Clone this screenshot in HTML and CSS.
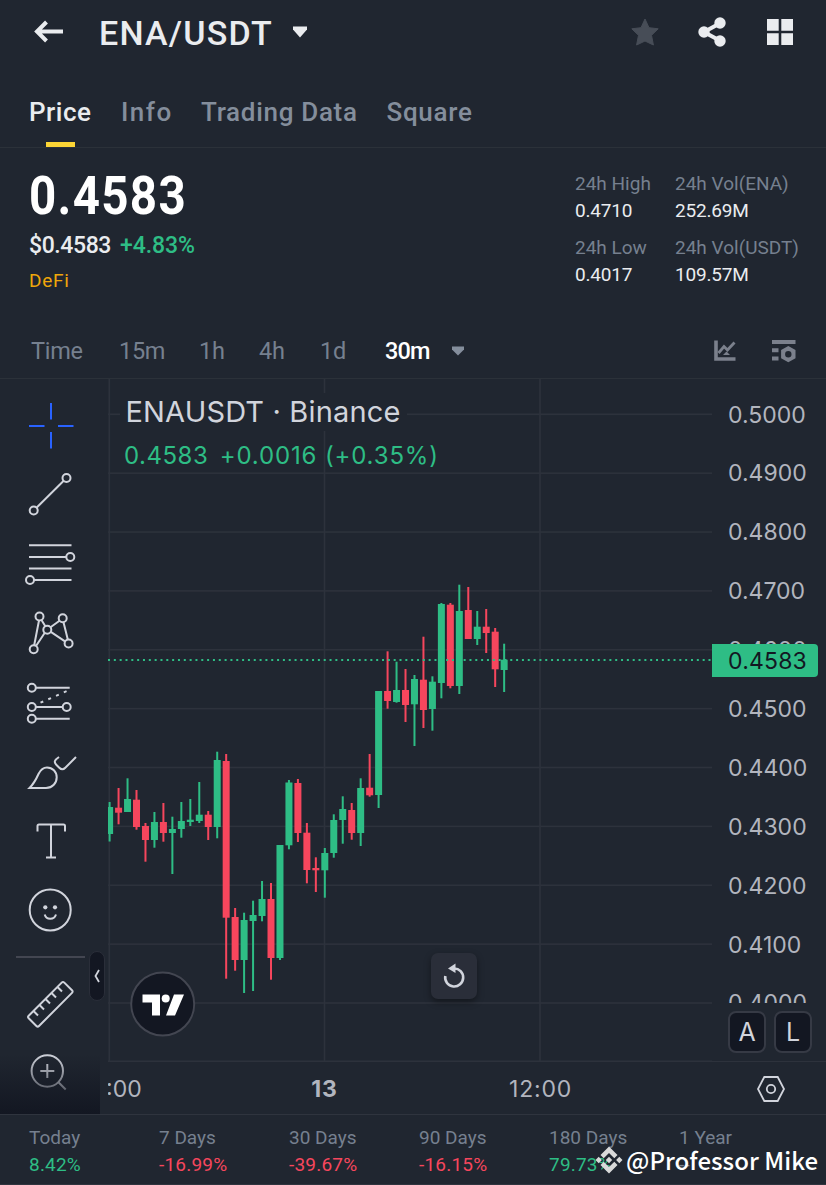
FILE: index.html
```html
<!DOCTYPE html>
<html lang="en">
<head>
    <meta charset="UTF-8">
    <meta name="viewport" content="width=device-width, initial-scale=1.0">
    <title>ENA/USDT</title>
    <link rel="stylesheet" href="styles.css">
</head>
<body>
    <div id="page">
        <div class="header">
            <svg class="back" width="30" height="24" viewBox="0 0 30 24"><path d="M12.500 2L3 11.500L12.500 21M3 11.500H29" fill="none" stroke="#eaecef" stroke-width="4"/></svg>
            <span class="pair">ENA/USDT</span>
            <svg class="caret" width="16" height="12" viewBox="0 0 16 12"><path d="M1 0.500h14v3L8 11.500L1 3.500z" fill="#eaecef"/></svg>
            <div class="header-icons">
                <svg width="30" height="30" viewBox="0 0 30 30"><path d="M15 2l4 8.700 9.200 1.100-6.700 6.500 1.900 9.700L15 24l-8.400 4 1.900-9.700-6.700-6.500L11 10.700z" fill="#474d57" stroke="#474d57" stroke-linejoin="round"/></svg>
                <svg width="30" height="30" viewBox="1 0 30 30"><path d="M23.500 6L7 15l16.500 9" fill="none" stroke="#eaecef" stroke-width="4"/><circle cx="23" cy="6" r="5.700" fill="#eaecef"/><circle cx="7" cy="15" r="5.700" fill="#eaecef"/><circle cx="23" cy="24" r="5.700" fill="#eaecef"/></svg>
                <svg width="30" height="30" viewBox="0 0 30 30"><path d="M2 2h11.700v11.700H2zM16.300 2H28v11.700H16.300zM2 16.300h11.700V28H2zM16.300 16.300H28V28H16.300z" fill="#eaecef"/></svg>
            </div>
        </div>

        <div class="tabs">
            <span class="tab active">Price</span>
            <span class="tab info">Info</span>
            <span class="tab trading">Trading Data</span>
            <span class="tab square">Square</span>
        </div>

        <div class="summary">
            <div class="summary-left">
                <div class="last-price">0.4583</div>
                <div class="fiat"><span>$0.4583</span><span class="up">+4.83%</span></div>
                <div class="tag">DeFi</div>
            </div>
            <div class="stats">
                <div><p>24h High</p><b>0.4710</b></div>
                <div><p>24h Vol(ENA)</p><b>252.69M</b></div>
                <div><p>24h Low</p><b>0.4017</b></div>
                <div><p>24h Vol(USDT)</p><b>109.57M</b></div>
            </div>
        </div>

        <div class="intervals">
            <span class="i-time">Time</span>
            <span class="i-15">15m</span>
            <span class="i-1h">1h</span>
            <span class="i-4h">4h</span>
            <span class="i-1d">1d</span>
            <span class="i-30 active">30m</span>
            <svg width="14" height="10" viewBox="0 0 14 10"><path d="M1 0.500h12v3L7 9.500L1 3.500z" fill="#848e9c"/></svg>
            <div class="interval-icons">
                <svg width="22" height="22" viewBox="0 0 22 22"><path d="M2 0.500v18.500h19.500" fill="none" stroke="#7b808c" stroke-width="3.600"/><path d="M4.500 13L10 6.500l3.500 3.500 7-7.500" fill="none" stroke="#7b808c" stroke-width="2.800"/><path d="M9 15l3.500-3.500L16 15z" fill="#7b808c"/></svg>
                <svg width="24" height="24" viewBox="0 0 24 24"><path d="M0 1h23.500v4H0zM0 9.300h6.500v4H0zM0 17.500h6.500v4H0z" fill="#7b808c"/><path d="M16.300 7l7.200 4v8.300l-7.200 4-7.200-4V11zM16.300 12a3.200 3.200 0 1 0 0 6.400 3.200 3.200 0 0 0 0-6.400z" fill="#7b808c" fill-rule="evenodd"/></svg>
            </div>
        </div>

        <div class="chart">
            <div class="tools">
                <svg width="100" height="69"><path d="M51 12v16.500M51 41v16.500M29 35h15.500M58 35h15.500" stroke="#2962ff"/></svg>
                <svg width="100" height="69"><path d="M36.500 47.700L63.700 20.800"/><circle cx="66.500" cy="18" r="4"/><circle cx="33.700" cy="50.500" r="4"/></svg>
                <svg width="100" height="69"><path d="M29 16.300h42.500M29 28h37.300M29 39.500h42.500M34 51h37.500"/><circle cx="70.300" cy="28" r="4"/><circle cx="30" cy="51" r="4"/></svg>
                <svg width="100" height="69"><path d="M41.500 22L45.300 28.200M50.500 29.300L59.500 22.700M63.500 24.300L67.800 41.500M65 43.300L50.800 33.800M44.800 34.800L36 48M34.200 47.300L39 22.500"/><circle cx="39.500" cy="18.500" r="4"/><circle cx="62.700" cy="20.300" r="4"/><circle cx="47.300" cy="31.700" r="4"/><circle cx="68.600" cy="45.500" r="4"/><circle cx="33.700" cy="51.300" r="4"/></svg>
                <svg width="100" height="69"><path d="M36 20.700h33.700M36 40h26.700M36 51.700h33.700"/><path d="M40.500 35.700L67 24" stroke-dasharray="3 5.500"/><circle cx="31.800" cy="20.700" r="4"/><circle cx="31.800" cy="40" r="4"/><circle cx="66.700" cy="40" r="4"/><circle cx="31.800" cy="51.700" r="4"/></svg>
                <svg width="100" height="69"><path d="M29.500 52c5-5 7-9.500 9-14 2-4 4.500-6.500 8.500-6.500 5.500 0 9.700 4.300 9.700 9.700C56.700 47 52.500 52 46 52zM59 21c-4.500 3-5.500 5-2.500 8l2.800 2.800c2 2 4 2 6 0L76 21"/></svg>
                <svg width="100" height="69"><path d="M37.500 26.500v-5.500q0-1.500 1.500-1.500h24.500q1.500 0 1.500 1.500v5.500M51 19.500v33M46 52.500h10"/></svg>
                <svg width="100" height="69"><circle cx="50.200" cy="36" r="20.500"/><path d="M44.700 40.500c1.500 5.700 9.500 5.700 11.300 0"/><circle class="eye" cx="45.300" cy="33.300" r="2.100"/><circle class="eye" cx="55" cy="33.300" r="2.100"/></svg>
                <hr>
                <svg width="100" height="69"><path d="M61.700 13.600q1.300-1.300 2.600 0l7.700 7.700q1.300 1.300 0 2.600L39 57q-1.300 1.300-2.600 0l-7.700-7.700q-1.300-1.300 0-2.600zM57.500 18l4.500 4.500M51.500 24l4.500 4.500M45.500 30l4.500 4.500M39.500 36l4.500 4.500M33.500 42l4.500 4.500"/></svg>
                <svg width="100" height="69"><circle cx="47.300" cy="33" r="15.700"/><path d="M47.300 26v14M40.300 33h14M58.700 44.500l7 7"/></svg>
                <div class="tools-fade"></div>
                <div class="collapse"><svg width="6" height="14" viewBox="0 0 6 14"><path d="M5 1L1.500 7L5 13" fill="none" stroke="#d1d4dc" stroke-width="1.800"/></svg></div>
            </div>

            <div class="plot">
                <svg id="candles" width="604" height="683" viewBox="108 379 604 683"></svg>
                <div class="legend">
                    <div class="symbol">ENAUSDT · Binance</div>
                    <div class="change"><span>0.4583</span><span>+0.0016 (+0.35%)</span></div>
                </div>
                <svg class="tv" width="66" height="66" viewBox="130 971.500 66 66"><circle cx="162.700" cy="1004.500" r="31.500" fill="#131722" stroke="#434651" stroke-width="2"/><path d="M142.500 995H160v21h-8v-13h-9.500zM174 995h10l-9 21h-9z" fill="#fff"/><circle cx="165.700" cy="999" r="4" fill="#fff"/></svg>
                <div class="reset"><svg width="24" height="28" viewBox="0 0 24 28"><path d="M3.300 14A9 9 0 1 0 12 6.500" fill="none" stroke="#d1d4dc" stroke-width="2.600"/><path d="M6 6.500L13.500 1.500V11z" fill="#d1d4dc"/></svg></div>
                <div class="time-axis"><span>:00</span><b>13</b><span>12:00</span></div>
            </div>

            <div class="price-axis">
                <div class="prices">
                    <span>0.5000</span>
                    <span>0.4900</span>
                    <span>0.4800</span>
                    <span>0.4700</span>
                    <span>0.4600</span>
                    <span>0.4500</span>
                    <span>0.4400</span>
                    <span>0.4300</span>
                    <span>0.4200</span>
                    <span>0.4100</span>
                    <span>0.4000</span>
                </div>
                <div class="scale"><span>A</span><span>L</span></div>
                <div class="axis-settings"><svg width="30" height="28" viewBox="0 0 30 28"><path d="M8.300 2h13.400L28 14l-6.300 12H8.300L2 14z" fill="none" stroke="#d1d4dc" stroke-width="1.800"/><circle cx="15" cy="14" r="4.200" fill="none" stroke="#d1d4dc" stroke-width="1.800"/></svg></div>
                <div class="current">0.4583</div>
            </div>
        </div>

        <div class="periods">
            <div><p>Today</p><span class="up">8.42%</span></div>
            <div><p>7 Days</p><span class="down">-16.99%</span></div>
            <div><p>30 Days</p><span class="down">-39.67%</span></div>
            <div><p>90 Days</p><span class="down">-16.15%</span></div>
            <div><p>180 Days</p><span class="up">79.73%</span></div>
            <div><p>1 Year</p><span class="none">--</span></div>
        </div>

        <div class="watermark">
            <svg width="28" height="28" viewBox="0 0 28 28"><path d="M14 0.500l8.500 8.500-3.200 3.200L14 6.900l-5.300 5.300L5.500 9zM14 27.500L5.500 19l3.200-3.200 5.300 5.300 5.300-5.300 3.200 3.200zM3.700 10.800L6.900 14l-3.200 3.200L0.500 14zM24.300 10.800l3.200 3.200-3.200 3.200-3.200-3.200zM14 10.800l3.200 3.200-3.200 3.200-3.200-3.200z" fill="#d9d9d9"/></svg>
            <span>@Professor Mike</span>
        </div>
    </div>

    <script src="chart.js"></script>
</body>
</html>
```
FILE: styles.css
```css
* {
    margin: 0;
    padding: 0;
    box-sizing: border-box;
}
body {
    background-color: #202630;
    color: #eaecef;
    font-family: Roboto, "Liberation Sans", sans-serif;
}
svg {
    display: block;
    flex: none;
}
#page {
    position: relative;
    width: 826px;
    height: 1185px;
    overflow: hidden;
}
.up {
    color: #2ebd85;
}
.down {
    color: #f6465d;
}

/* header */
.header {
    display: flex;
    align-items: center;
    height: 66px;
    padding: 0 31px 0 34px;
}
.pair {
    width: 192px;
    margin-left: 35px;
    font-size: 34px;
    font-weight: 500;
    letter-spacing: 1.200px;
}
.header .back,
.header .caret {
    margin-bottom: 3px;
}
.header .caret {
    margin-left: 1px;
}
.header-icons {
    display: flex;
    gap: 37.500px;
    margin: 0 0 2px auto;
}

/* tabs */
.tabs {
    display: flex;
    height: 82px;
    padding-left: 29px;
    border-bottom: 1px solid #2b3139;
    font-size: 26px;
    font-weight: 500;
    line-height: 92px;
    color: #848e9c;
}
.tab {
    position: relative;
    white-space: nowrap;
    letter-spacing: 0.700px;
}
.tab.active {
    width: 92px;
    letter-spacing: 0.500px;
    color: #eaecef;
}
.tab.active::after {
    content: "";
    position: absolute;
    left: 17px;
    bottom: 0;
    width: 29px;
    height: 5px;
    background-color: #fcd535;
}
.tab.info {
    width: 80px;
    letter-spacing: 1.500px;
}
.trading {
    width: 185.500px;
}

/* price summary */
.summary {
    display: flex;
    justify-content: space-between;
    height: 176px;
    padding: 22px 26px 0 29px;
}
.last-price {
    height: 60px;
    font-size: 54px;
    font-weight: 700;
    line-height: 52px;
    letter-spacing: 1.500px;
    color: #fff;
    /* narrow the digits */
    transform: scaleX(0.880);
    transform-origin: 0 0;
}
.fiat {
    display: flex;
    gap: 9px;
    font-size: 23px;
    font-weight: 500;
    line-height: 31px;
    letter-spacing: -0.400px;
}
.fiat .up {
    letter-spacing: -0.100px;
}
.tag {
    margin-top: 7px;
    font-size: 19px;
    line-height: 26px;
    letter-spacing: 0.700px;
    color: #f0a70a;
}
.stats {
    display: grid;
    grid-template-columns: 100px 124px;
    grid-auto-rows: 63.500px;
    margin-right: 1px;
    font-size: 19px;
    line-height: 27px;
    white-space: nowrap;
}
.stats p {
    color: #76808f;
}
.stats b {
    font-weight: 400;
    letter-spacing: -0.200px;
}

/* interval bar */
.intervals {
    display: flex;
    align-items: center;
    height: 55px;
    padding: 0 30px 0 31px;
    border-bottom: 1px solid #2b3139;
    font-size: 23.500px;
    letter-spacing: -0.300px;
    color: #76808f;
}
.i-time {
    width: 88px;
}
.i-15 {
    width: 80px;
}
.i-1h {
    width: 60px;
}
.i-4h {
    width: 61px;
}
.i-1d {
    width: 65px;
}
.i-30 {
    width: 66px;
    font-weight: 500;
    letter-spacing: -0.900px;
    color: #fff;
}
.interval-icons {
    display: flex;
    align-items: center;
    gap: 36.500px;
    margin-left: auto;
}

/* chart */
.chart {
    display: flex;
    height: 735px;
    font-family: Inter, "Liberation Sans", sans-serif;
    font-size: 23px;
    color: #b2b5be;
}
.tools {
    position: relative;
    width: 108px;
    padding-top: 12px;
}
.tools > svg {
    fill: none;
    stroke: #d1d4dc;
    stroke-width: 2;
}
.tools .eye {
    fill: #d1d4dc;
    stroke: none;
}
.tools hr {
    width: 69px;
    height: 2px;
    margin: 13px 0 11px 16px;
    border: 0;
    background-color: #434651;
}
.tools-fade {
    position: absolute;
    left: 0;
    bottom: 0;
    width: 100px;
    height: 60px;
    background: linear-gradient(rgba(19, 23, 34, 0), #131722);
}
.collapse {
    position: absolute;
    left: 89px;
    top: 572px;
    display: flex;
    align-items: center;
    justify-content: center;
    width: 16px;
    height: 50px;
    border: 1px solid #2a2e39;
    border-radius: 8px;
    background-color: #131722;
}
.plot {
    position: relative;
    width: 604px;
}
.legend {
    position: absolute;
    left: 12px;
    top: 14px;
}
.symbol {
    width: 287px;
    padding-left: 5.500px;
    background-color: #202630;
    font-size: 29px;
    line-height: 38px;
    letter-spacing: 0.150px;
    color: #d1d4dc;
    white-space: nowrap;
}
.change {
    display: flex;
    gap: 11.500px;
    padding: 5px 0 0 4px;
    font-size: 24px;
    line-height: 40px;
    letter-spacing: 0.700px;
    color: #2ebd85;
}
.change span:first-child {
    letter-spacing: 0.500px;
}
.change span:last-child {
    letter-spacing: 0.850px;
}
.tv {
    position: absolute;
    left: 22px;
    top: 592px;
}
.reset {
    position: absolute;
    left: 323px;
    top: 574px;
    display: flex;
    align-items: center;
    justify-content: center;
    width: 46px;
    height: 46px;
    border-radius: 7px;
    background-color: #2a2e39;
    box-shadow: 0 3px 7px rgba(0, 0, 0, 0.400);
}
.time-axis {
    display: grid;
    grid-template-columns: 108px 217px 215px;
    height: 52px;
    overflow: hidden;
    line-height: 55px;
    letter-spacing: 0.800px;
}
.time-axis span:first-child {
    margin-left: -2px;
    letter-spacing: 0;
}
.time-axis b,
.time-axis span + b + span {
    text-align: center;
}
.price-axis {
    position: relative;
    width: 114px;
}
.prices {
    display: flex;
    flex-direction: column;
    height: 624px;
    padding-top: 6.500px;
    overflow: hidden;
    line-height: 58.900px;
}
.prices span {
    flex: none;
    height: 58.900px;
    padding-left: 16px;
}
.scale {
    display: flex;
    gap: 8px;
    height: 59px;
    padding: 8px 0 0 16px;
    border-bottom: 1px solid #2d323c;
    font-size: 25px;
}
.scale span {
    width: 38px;
    height: 42px;
    border: 2px solid #363a45;
    border-radius: 8px;
    background-color: #131722;
    line-height: 39px;
    text-align: center;
    color: #d1d4dc;
}
.axis-settings {
    padding: 12.500px 0 0 44px;
}
.current {
    position: absolute;
    left: 0;
    top: 265px;
    width: 106px;
    height: 33px;
    padding-left: 16px;
    border-radius: 0 4px 4px 0;
    background-color: #2ebd85;
    line-height: 34px;
    letter-spacing: 0.200px;
    color: #131722;
}

/* period changes */
.periods {
    display: grid;
    grid-template-columns: repeat(6, 130px);
    height: 71px;
    padding: 9px 0 0 29px;
    border-top: 1px solid #2f343e;
    border-bottom: 1px solid #2f343e;
    font-size: 19px;
    line-height: 27px;
}
.periods span {
    letter-spacing: 0.200px;
}
.periods p,
.none {
    color: #76808f;
}

.watermark {
    position: absolute;
    left: 595px;
    top: 1142px;
    display: flex;
    align-items: center;
    gap: 3px;
    font-family: "Noto Sans CJK SC", sans-serif;
    font-size: 24px;
    font-weight: 500;
    line-height: 36px;
    letter-spacing: 0.050px;
    color: #fff;
    white-space: nowrap;
}
```
FILE: chart.js
```js
// high, body top, body bottom, low, 1 = up
var candles = [
    [802, 807, 834, 841.5, 1], [788, 807.7, 812.7, 824.3, 0], [778.3, 799, 812, 812, 1],
    [790, 799.7, 827, 829.7, 0], [823, 826, 840, 861.7, 0], [812, 822, 840, 847.7, 1],
    [803, 822, 833, 841.7, 0], [816.7, 829, 833, 874, 1], [802, 821, 829, 837.7, 1],
    [799, 819.7, 822, 826, 1], [782, 814.7, 821, 823, 1], [811, 814.7, 827, 840, 0],
    [751.7, 760, 827, 838.3, 1], [754, 761, 917.7, 978.7, 0], [908, 917, 960, 970.7, 0],
    [912.7, 920, 960, 993, 1], [900.7, 915, 921, 991, 1], [881, 899, 916, 921.3, 1],
    [883, 899, 958, 979.7, 0], [845, 845, 958, 960, 1], [780, 782.5, 845.3, 849.3, 1],
    [779, 783, 833, 842, 0], [823, 832.7, 870, 883.3, 0], [857.3, 868, 870.3, 892, 0],
    [848, 853, 870.3, 897.7, 1], [814.3, 820, 853, 857.7, 1], [796.3, 809, 820, 843.7, 1],
    [803, 810, 833, 839.7, 0], [778.3, 788, 833, 846, 1], [754, 787.7, 795.3, 796.7, 0],
    [691, 691, 795, 808, 1], [651.3, 691, 701, 708.7, 0], [661.7, 690, 702, 702.7, 1],
    [669, 690, 705, 722, 0], [675, 679, 704.3, 746, 1], [636.7, 679.7, 710, 728, 0],
    [676.3, 681.7, 709, 730.7, 1], [603, 604, 683, 698.3, 1], [603, 604.7, 686, 688.3, 0],
    [584.7, 611, 686, 694, 1], [587, 610, 639, 639, 0], [611, 626.7, 639, 645, 1],
    [609, 626.7, 633, 653, 0], [628, 631.7, 669.3, 687, 0], [643.7, 659.7, 670, 692, 1]
];

var svg = document.getElementById('candles');

function rect(x, y, w, h, color) {
    var el = document.createElementNS('http://www.w3.org/2000/svg', 'rect');
    el.setAttribute('x', x);
    el.setAttribute('y', y);
    el.setAttribute('width', w);
    el.setAttribute('height', h);
    el.setAttribute('fill', color);
    svg.appendChild(el);
}

// grid
for (var i = 0; i < 11; i++) {
    rect(108, 413.5 + 58.87 * i, 604, 1.6, '#2d323c');
}
[108.5, 323.7, 539.2].forEach(function (x) {
    rect(x, 379, 1.6, 683, '#2d323c');
});
rect(108, 1060.5, 604, 1.5, '#2d323c');

for (var i = 0; i < candles.length; i++) {
    var c = candles[i];
    var x = 109.6 + 8.967 * i;
    var color = c[4] ? '#2ebd85' : '#f6465d';
    rect(x - 1, c[0], 2, c[3] - c[0], color);
    rect(x - 3.5, c[1], 7, c[2] - c[1], color);
}

// last price line
for (var x = 108; x < 712; x += 5.83) {
    rect(x, 659, 2, 2, '#2ebd85');
}
```
